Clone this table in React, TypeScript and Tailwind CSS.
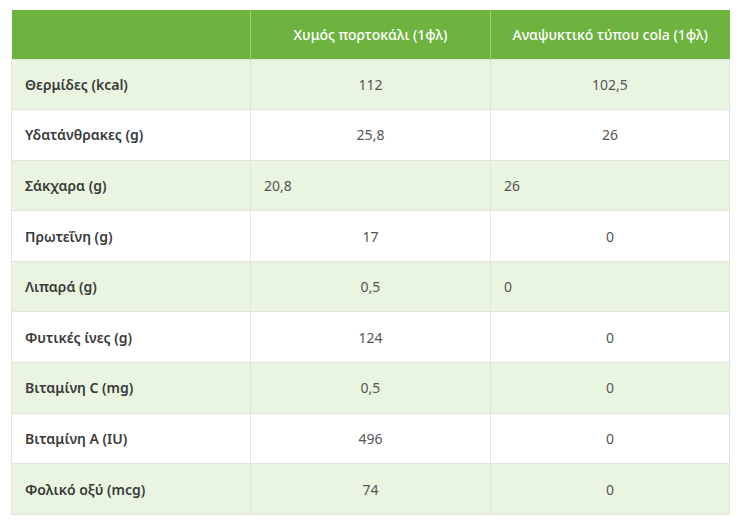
const rows: { label: string; a: string; b: string; alignA?: "left"; alignB?: "left" }[] = [
  { label: "Θερμίδες (kcal)", a: "112", b: "102,5" },
  { label: "Υδατάνθρακες (g)", a: "25,8", b: "26" },
  { label: "Σάκχαρα (g)", a: "20,8", b: "26", alignA: "left", alignB: "left" },
  { label: "Πρωτεΐνη (g)", a: "17", b: "0" },
  { label: "Λιπαρά (g)", a: "0,5", b: "0", alignB: "left" },
  { label: "Φυτικές ίνες (g)", a: "124", b: "0" },
  { label: "Βιταμίνη C (mg)", a: "0,5", b: "0" },
  { label: "Βιταμίνη A (IU)", a: "496", b: "0" },
  { label: "Φολικό οξύ (mcg)", a: "74", b: "0" },
];

export default function App() {
  return (
    <div className="min-h-screen bg-white pt-[10px] pl-[11px] font-['Noto_Sans',sans-serif]">
      <table className="w-[718px] table-fixed border-collapse text-[14px]">
        <colgroup>
          <col className="w-[239px]" />
          <col className="w-[240px]" />
          <col className="w-[239px]" />
        </colgroup>
        <thead>
          <tr className="h-[49px] bg-[#6eb33f] text-white">
            <th className="border-r border-[#9fd07a]" />
            <th className="border-r border-[#9fd07a] px-[13px] text-center font-medium">Χυμός πορτοκάλι (1φλ)</th>
            <th className="px-[13px] text-center font-medium">Αναψυκτικό τύπου cola (1φλ)</th>
          </tr>
        </thead>
        <tbody>
          {rows.map((r, i) => (
            <tr key={r.label} className={`h-[50.6px] ${i % 2 === 0 ? "bg-[#e9f5e1]" : "bg-white"}`}>
              <td className="border border-[#e2e4e0] px-[13px] font-semibold text-[#3a3a3a]">{r.label}</td>
              <td className={`border border-[#e2e4e0] px-[13px] text-[#555] ${r.alignA ? "text-left" : "text-center"}`}>{r.a}</td>
              <td className={`border border-[#e2e4e0] px-[13px] text-[#555] ${r.alignB ? "text-left" : "text-center"}`}>{r.b}</td>
            </tr>
          ))}
        </tbody>
      </table>
    </div>
  );
}
